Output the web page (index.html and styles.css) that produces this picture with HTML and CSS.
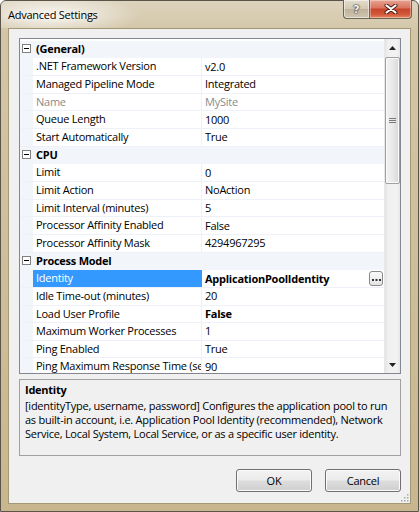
FILE: index.html
```html
<!DOCTYPE html>
<html>
<head>
<meta charset="utf-8">
<link rel="stylesheet" href="styles.css">
</head>
<body>
<div class="window">
  <div class="titlebar">
    <span class="title">Advanced Settings</span>
    <div class="caption">
      <div class="cbtn help">?</div>
      <div class="cbtn close">
        <svg width="14" height="10" viewBox="0 0 14 10"><path d="M2.5 1.5 L11.5 8.5 M11.5 1.5 L2.5 8.5" stroke="#4a1a12" stroke-width="4" stroke-linecap="round"/><path d="M2.5 1.5 L11.5 8.5 M11.5 1.5 L2.5 8.5" stroke="#ffffff" stroke-width="2.2" stroke-linecap="round"/></svg>
      </div>
    </div>
  </div>
  <div class="client">
    <div class="grid">
      <div class="rows">
        <div class="row cat"><span class="toggle"><svg width="9" height="9" viewBox="0 0 9 9"><rect x="0.5" y="0.5" width="8" height="8" fill="#fff" stroke="#808080"/><path d="M2 4.5 H7" stroke="#000"/></svg></span><span class="catname">(General)</span></div>
        <div class="row"><span class="gutter"></span><span class="name">.NET Framework Version</span><span class="value">v2.0</span></div>
        <div class="row"><span class="gutter"></span><span class="name">Managed Pipeline Mode</span><span class="value">Integrated</span></div>
        <div class="row dis"><span class="gutter"></span><span class="name">Name</span><span class="value">MySite</span></div>
        <div class="row"><span class="gutter"></span><span class="name">Queue Length</span><span class="value">1000</span></div>
        <div class="row"><span class="gutter"></span><span class="name">Start Automatically</span><span class="value">True</span></div>
        <div class="row cat"><span class="toggle"><svg width="9" height="9" viewBox="0 0 9 9"><rect x="0.5" y="0.5" width="8" height="8" fill="#fff" stroke="#808080"/><path d="M2 4.5 H7" stroke="#000"/></svg></span><span class="catname">CPU</span></div>
        <div class="row"><span class="gutter"></span><span class="name">Limit</span><span class="value">0</span></div>
        <div class="row"><span class="gutter"></span><span class="name">Limit Action</span><span class="value">NoAction</span></div>
        <div class="row"><span class="gutter"></span><span class="name">Limit Interval (minutes)</span><span class="value">5</span></div>
        <div class="row"><span class="gutter"></span><span class="name">Processor Affinity Enabled</span><span class="value">False</span></div>
        <div class="row"><span class="gutter"></span><span class="name">Processor Affinity Mask</span><span class="value">4294967295</span></div>
        <div class="row cat"><span class="toggle"><svg width="9" height="9" viewBox="0 0 9 9"><rect x="0.5" y="0.5" width="8" height="8" fill="#fff" stroke="#808080"/><path d="M2 4.5 H7" stroke="#000"/></svg></span><span class="catname">Process Model</span></div>
        <div class="row sel"><span class="gutter"></span><span class="name">Identity</span><span class="value bold">ApplicationPoolIdentity<span class="ellipsis"><svg width="9" height="3" viewBox="0 0 9 3"><rect x="0" y="0" width="2" height="2" fill="#333"/><rect x="3.5" y="0" width="2" height="2" fill="#333"/><rect x="7" y="0" width="2" height="2" fill="#333"/></svg></span></span></div>
        <div class="row"><span class="gutter"></span><span class="name">Idle Time-out (minutes)</span><span class="value">20</span></div>
        <div class="row"><span class="gutter"></span><span class="name">Load User Profile</span><span class="value bold">False</span></div>
        <div class="row"><span class="gutter"></span><span class="name">Maximum Worker Processes</span><span class="value">1</span></div>
        <div class="row"><span class="gutter"></span><span class="name">Ping Enabled</span><span class="value">True</span></div>
        <div class="row"><span class="gutter"></span><span class="name">Ping Maximum Response Time (seconds)</span><span class="value">90</span></div>
      </div>
      <div class="vscroll">
        <div class="arrow"><svg width="7" height="4" viewBox="0 0 7 4"><path d="M0 4 L3.5 0 L7 4 Z" fill="#222"/></svg></div>
        <div class="track">
          <div class="thumb"><span class="grip"></span></div>
        </div>
        <div class="arrow"><svg width="7" height="4" viewBox="0 0 7 4"><path d="M0 0 L7 0 L3.5 4 Z" fill="#222"/></svg></div>
      </div>
    </div>
    <div class="desc">
      <div class="desc-title">Identity</div>
      <div class="desc-text">[identityType, username, password] Configures the application pool to run as built-in account, i.e. Application Pool Identity (recommended), Network Service, Local System, Local Service, or as a specific user identity.</div>
    </div>
    <div class="actions">
      <button class="btn">OK</button>
      <button class="btn">Cancel</button>
    </div>
    <div class="sizegrip">
      <svg width="8" height="8" viewBox="0 0 8 8" fill="#a8a8a8"><rect x="6" y="0" width="1.5" height="1.5"/><rect x="3" y="3" width="1.5" height="1.5"/><rect x="6" y="3" width="1.5" height="1.5"/><rect x="0" y="6" width="1.5" height="1.5"/><rect x="3" y="6" width="1.5" height="1.5"/><rect x="6" y="6" width="1.5" height="1.5"/></svg>
    </div>
  </div>
</div>
</body>
</html>
```

FILE: styles.css
```css
* { box-sizing: border-box; }
html, body { margin: 0; padding: 0; }
body {
  width: 419px;
  height: 512px;
  overflow: hidden;
  background: #ffffff;
  font-family: "Open Sans", "Noto Sans", sans-serif;
  font-size: 11px;
  letter-spacing: -0.25px;
  color: #000;
}
.window {
  width: 419px;
  height: 512px;
  display: flex;
  flex-direction: column;
  background: linear-gradient(180deg, #ddd3bd 0px, #d3c6a8 30px, #c8b78e 100%);
  border: 1px solid #5a5548;
  border-radius: 6px 6px 0 0;
  position: relative;
}
.titlebar {
  height: 27px;
  flex: none;
  display: flex;
  align-items: flex-start;
  padding-left: 7px;
  background: radial-gradient(ellipse 90px 22px at 50px 14px, rgba(255,255,255,0.85), rgba(255,255,255,0) 100%);
}
.title {
  font-size: 11px;
  line-height: 27px;
  color: #000;
  text-shadow: 0 0 6px rgba(255,255,255,0.9);
}
.caption {
  margin-left: auto;
  margin-right: 6px;
  display: flex;
  margin-top: -1px;
}
.cbtn {
  height: 19px;
  display: flex;
  align-items: center;
  justify-content: center;
  border: 1px solid #6b6455;
  border-top: none;
}
.help {
  width: 26px;
  border-radius: 0 0 0 4px;
  border-right: none;
  background: linear-gradient(180deg, #e4ddcf 0%, #d2c7b1 50%, #bfb29a 51%, #cfc5b1 100%);
  color: #f4f4f4;
  font-family: "DejaVu Sans", sans-serif;
  font-weight: bold;
  font-size: 11px;
  letter-spacing: 0;
  text-shadow: 0 0 1px #333, 0 0 1px #333, 0 0 2px #444;
  box-shadow: inset 0 0 0 1px rgba(255,255,255,0.5);
}
.close {
  width: 43px;
  border-radius: 0 0 4px 0;
  background: linear-gradient(180deg, #e8a493 0%, #d8735d 45%, #c7452a 50%, #d2583b 80%, #e58a62 100%);
  box-shadow: inset 0 0 0 1px rgba(255,255,255,0.35);
}
.close svg { display: block; }

.client {
  flex: 1;
  margin: 0 7px 7px 7px;
  background: #f0f0f0;
  border: 1px solid #a49774;
  padding: 9px 9px 0 10px;
  display: flex;
  flex-direction: column;
  position: relative;
}
.grid {
  height: 336px;
  flex: none;
  border: 1px solid #828790;
  background: #ffffff;
  display: flex;
}
.rows {
  flex: 1;
  overflow: hidden;
  padding-top: 1.67px;
  background: #ffffff;
}
.row {
  height: 17.67px;
  display: flex;
  align-items: stretch;
  border-bottom: 1px solid #eef2f8;
  white-space: nowrap;
  line-height: 16px;
}
.row.cat {
  background: #f2f5fa;
  border-bottom: 1px solid #f2f5fa;
  font-weight: bold;
}
.toggle {
  width: 16px;
  flex: none;
  display: flex;
  align-items: center;
  padding-left: 2px;
}
.toggle svg { display: block; }
.gutter {
  width: 13px;
  flex: none;
  background: #f2f5fa;
}
.name {
  width: 169px;
  flex: none;
  padding-left: 3px;
  overflow: hidden;
  border-right: 1px solid #eef2f8;
}
.value {
  flex: 1;
  padding-left: 3px;
  display: flex;
  align-items: center;
  min-width: 0;
}
.dis .name, .dis .value { color: #8a8a8a; }
.bold { font-weight: bold; }
.sel .name {
  background: #3399ff;
  color: #ffffff;
  border-right-color: #3399ff;
}
.ellipsis {
  margin-left: auto;
  margin-right: 1px;
  width: 14px;
  height: 15px;
  border: 1px solid #8a8a8a;
  border-radius: 3px;
  background: linear-gradient(180deg, #fafafa, #e4e4e4);
  display: flex;
  align-items: flex-end;
  justify-content: center;
  padding-bottom: 3px;
}
.ellipsis svg { display: block; }

.vscroll {
  width: 16px;
  flex: none;
  display: flex;
  flex-direction: column;
  background: linear-gradient(90deg, #e3e3e3 0%, #f0f0f0 20%, #f2f2f2 80%, #e6e6e6 100%);
  border-left: 1px solid #e8e8e8;
}
.arrow {
  height: 17px;
  flex: none;
  display: flex;
  align-items: center;
  justify-content: center;
}
.arrow svg { display: block; }
.track {
  flex: 1;
  display: flex;
  flex-direction: column;
}
.thumb {
  height: 127px;
  margin: 1px 0 0 0;
  border: 1px solid #a0a0a0;
  border-radius: 2px;
  background: linear-gradient(90deg, #f3f3f3 0%, #e9e9e9 50%, #d8d8d8 100%);
  box-shadow: inset 0 0 0 1px #fafafa;
  display: flex;
  align-items: center;
  justify-content: center;
}
.grip {
  width: 7px;
  height: 5px;
  border-top: 1px solid #7a7a7a;
  border-bottom: 1px solid #7a7a7a;
  position: relative;
}
.grip::after {
  content: "";
  position: absolute;
  left: 0;
  right: 0;
  top: 1px;
  border-top: 1px solid #7a7a7a;
}

.desc {
  margin-top: 5px;
  height: 77px;
  flex: none;
  border: 1px solid #a0a0a0;
  background: #f0f0f0;
  padding: 2px 4px 0 5px;
}
.desc-title {
  font-weight: bold;
  line-height: 16px;
  margin-bottom: 1px;
}
.desc-text {
  line-height: 14px;
}

.actions {
  display: flex;
  justify-content: flex-end;
  gap: 13px;
  margin-top: 13px;
}
.btn {
  width: 76px;
  height: 23px;
  font-family: inherit;
  font-size: 11px;
  letter-spacing: inherit;
  color: #000;
  border: 1px solid #707070;
  border-radius: 3px;
  background: linear-gradient(180deg, #f2f2f2 0%, #ebebeb 48%, #dddddd 52%, #cfcfcf 100%);
  box-shadow: inset 0 0 0 1px #fbfbfb;
  padding: 0;
}
.sizegrip {
  position: absolute;
  right: 1px;
  bottom: 1px;
  width: 8px;
  height: 8px;
}
.sizegrip svg { display: block; }
```
